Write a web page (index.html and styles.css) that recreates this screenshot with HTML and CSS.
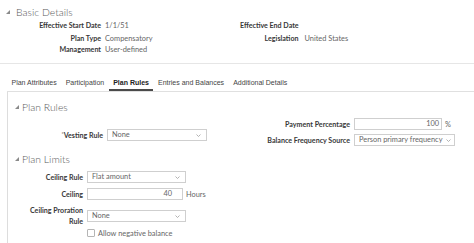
FILE: index.html
```html
<!DOCTYPE html>
<html lang="en">
<head>
  <meta charset="UTF-8">
  <title>Plan Rules</title>
  <link rel="stylesheet" href="styles.css">
</head>
<body>
  <div class="basic">
    <h2 class="sec-title basic-title">
      <svg class="tri" width="4" height="4" viewBox="0 0 4 4"><polygon points="4,0 4,4 0,4" fill="#8a8a8a"/></svg>
      Basic Details
    </h2>
    <div class="basic-grid">
      <div class="form">
        <div class="field first"><label class="lbl w-basic-l">Effective Start Date</label><span class="val">1/1/51</span></div>
        <div class="field"><label class="lbl w-basic-l">Plan Type</label><span class="val">Compensatory</span></div>
        <div class="field"><label class="lbl w-basic-l">Management</label><span class="val">User-defined</span></div>
      </div>
      <div class="form">
        <div class="field first"><label class="lbl w-basic-r">Effective End Date</label><span class="val"></span></div>
        <div class="field"><label class="lbl w-basic-r">Legislation</label><span class="val">United States</span></div>
      </div>
    </div>
  </div>

  <nav class="tabs">
    <div class="tab">Plan Attributes</div>
    <div class="tab">Participation</div>
    <div class="tab active">Plan Rules</div>
    <div class="tab">Entries and Balances</div>
    <div class="tab">Additional Details</div>
  </nav>

  <div class="panel">
    <h3 class="sec-title">
      <svg class="tri" width="4" height="4" viewBox="0 0 4 4"><polygon points="4,0 4,4 0,4" fill="#8a8a8a"/></svg>
      Plan Rules
    </h3>
    <div class="rules-grid">
      <div class="form vesting">
        <div class="field ctl-row">
          <label class="lbl w-vest"><sup>*</sup>Vesting Rule</label>
          <div class="select w100">None<svg class="chev" width="5" height="3" viewBox="0 0 5 3"><polyline points="0.5,0.5 2.5,2.5 4.5,0.5" fill="none" stroke="#a0a0a0" stroke-width="0.8"/></svg></div>
        </div>
      </div>
      <div class="form pay">
        <div class="field ctl-row">
          <label class="lbl w-pay">Payment Percentage</label>
          <div class="input w88 num">100</div><span class="unit">%</span>
        </div>
        <div class="field ctl-row">
          <label class="lbl w-pay">Balance Frequency Source</label>
          <div class="select w101 tight">Person primary frequency<svg class="chev" width="5" height="3" viewBox="0 0 5 3"><polyline points="0.5,0.5 2.5,2.5 4.5,0.5" fill="none" stroke="#a0a0a0" stroke-width="0.8"/></svg></div>
        </div>
      </div>
    </div>

    <h3 class="sec-title limits-title">
      <svg class="tri" width="4" height="4" viewBox="0 0 4 4"><polygon points="4,0 4,4 0,4" fill="#8a8a8a"/></svg>
      Plan Limits
    </h3>
    <div class="form limits">
      <div class="field ctl-row">
        <label class="lbl w-lim">Ceiling Rule</label>
        <div class="select w99">Flat amount<svg class="chev" width="5" height="3" viewBox="0 0 5 3"><polyline points="0.5,0.5 2.5,2.5 4.5,0.5" fill="none" stroke="#a0a0a0" stroke-width="0.8"/></svg></div>
      </div>
      <div class="field ctl-row">
        <label class="lbl w-lim">Ceiling</label>
        <div class="input w96 num pad-r">40</div><span class="unit">Hours</span>
      </div>
      <div class="field tall">
        <label class="lbl w-lim">Ceiling Proration<br>Rule</label>
        <div class="select w99">None<svg class="chev" width="5" height="3" viewBox="0 0 5 3"><polyline points="0.5,0.5 2.5,2.5 4.5,0.5" fill="none" stroke="#a0a0a0" stroke-width="0.8"/></svg></div>
      </div>
      <div class="field check-row">
        <span class="check"></span><span class="check-text">Allow negative balance</span>
      </div>
    </div>
  </div>
</body>
</html>
```

FILE: styles.css
```css
* {
  box-sizing: border-box;
}

body {
  margin: 0;
  font-family: 'Lato', 'Open Sans', sans-serif;
  font-size: 7.4px;
  color: #333;
  background-color: #ffffff;
}

.sec-title {
  display: flex;
  align-items: center;
  gap: 3px;
  height: 13px;
  margin: 0;
  padding-left: 7px;
  font-family: 'Lato', 'Open Sans', sans-serif;
  font-size: 10.4px;
  font-weight: 300;
  color: #5a5a5a;
}

.tri {
  flex: none;
  margin-top: 1px;
}

/* basic details */
.basic {
  padding: 5px 0 8px;
  border-bottom: 1px solid #e6e6e6;
}

.basic-title {
  padding-left: 6px;
  gap: 6px;
}

.basic-grid {
  display: grid;
  grid-template-columns: 240px 1fr;
  margin-top: 2px;
}

.field {
  display: flex;
  align-items: center;
  height: 11px;
}

.field.first {
  margin-bottom: 2px;
}

.lbl {
  flex: none;
  text-align: right;
  font-size: 7.1px;
  font-weight: 700;
  color: #383838;
  white-space: nowrap;
}

.lbl sup {
  font-size: 5px;
  font-weight: 400;
  vertical-align: 2px;
  line-height: 0;
}

.val {
  color: #666;
  white-space: nowrap;
}

.w-basic-l {
  width: 101px;
  margin-right: 4px;
}

.w-basic-r {
  width: 58.5px;
  margin-right: 6px;
}

/* tabs */
.tabs {
  display: flex;
  margin-left: 7px;
  border-bottom: 1px solid #e0e0e0;
  font-family: 'Liberation Sans', Arial, sans-serif;
  font-size: 7px;
  color: #444;
}

.tab {
  padding: 14px 4.5px 1px;
  line-height: 10px;
  border-bottom: 2px solid transparent;
  white-space: nowrap;
}

.tab.active {
  font-weight: bold;
  color: #222;
  border-bottom-color: #4a4a4a;
}

/* panel */
.panel {
  margin-left: 7px;
  padding-top: 8px;
  border-left: 1px solid #dddddd;
  min-height: 151px;
}

.rules-grid {
  display: grid;
  grid-template-columns: 232px 1fr;
  align-items: start;
  margin-top: 5px;
}

.vesting {
  margin-top: 11px;
}

.pay {
  display: flex;
  flex-direction: column;
  gap: 4px;
}

.ctl-row {
  height: 12px;
}

.w-vest {
  width: 95px;
  margin-right: 4px;
}

.w-pay {
  width: 110px;
  margin-right: 4px;
}

.w-lim {
  width: 75px;
  margin-right: 4px;
  line-height: 11px;
}

.select,
.input {
  position: relative;
  height: 12px;
  padding-left: 4px;
  border: 1px solid #cfcfcf;
  background-color: #fff;
  color: #666;
  line-height: 10px;
  white-space: nowrap;
  overflow: hidden;
}

.num {
  text-align: right;
  padding-right: 2px;
}

.num.pad-r {
  padding-right: 10px;
}

.chev {
  position: absolute;
  right: 5px;
  top: 4px;
}

.tight .chev {
  right: 3px;
}

.unit {
  margin-left: 3px;
  color: #666;
}

.w100 { width: 100px; }
.w101 { width: 101px; }
.w99 { width: 99px; }
.w96 { width: 96px; }
.w88 { width: 88px; }

.limits-title {
  margin-top: 6px;
}

.limits {
  display: flex;
  flex-direction: column;
  gap: 5px;
  margin-top: 6px;
}

.field.tall {
  height: 22px;
}

.check-row {
  height: 8px;
  margin-top: -3px;
  padding-left: 79px;
}

.check {
  width: 8px;
  height: 8px;
  border: 1px solid #b5b5b5;
  border-radius: 1px;
  background-color: #fff;
}

.check-text {
  margin-left: 3px;
  color: #666;
}
```
